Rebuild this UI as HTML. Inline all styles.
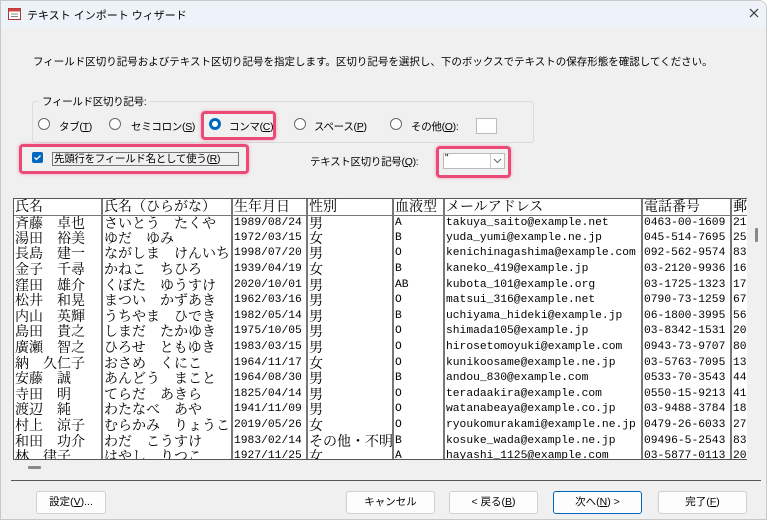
<!DOCTYPE html>
<html><head><meta charset="utf-8"><style>
*{margin:0;padding:0;box-sizing:border-box}
body{width:768px;height:520px;background:#fff;font-family:"Liberation Sans","Noto Sans CJK JP",sans-serif;font-size:11px;color:#000;position:relative;overflow:hidden}
.win{position:absolute;left:0;top:0;width:767px;height:520px;background:#f0f0f0;border:1px solid #c8c8c8;border-radius:0 8px 0 0;overflow:hidden}
.title{position:absolute;left:0;top:0;width:100%;height:26px;background:#eef3fa}
.abs{position:absolute;white-space:nowrap}
.lbl{font-size:10.5px;letter-spacing:-.3px}
.pink{position:absolute;border:3px solid #ec4a76;border-radius:4px;box-shadow:0 0 3px rgba(236,74,118,.5)}
.radio{position:absolute;width:12px;height:12px;border:1px solid #666;border-radius:50%;background:#fff}
.radio.on{border:none;background:#0067c0}
.radio.on:after{content:"";position:absolute;left:3px;top:3px;width:6px;height:6px;border-radius:50%;background:#fff}
.tbl{position:absolute;left:12px;top:197px;width:734px;height:262px;overflow:hidden;background:#fff;border:1px solid #555;border-right:none}
table{border-collapse:collapse;font-family:"Noto Serif CJK JP","Liberation Serif",serif;font-size:14px;table-layout:fixed;width:742px}
td{border-left:2px solid #777;height:15.6px;line-height:15px;padding:0 0 0 1px;white-space:nowrap;overflow:hidden;vertical-align:middle}
td:first-child{border-left:none}
tr.h td{border-bottom:1px solid #777;height:16px}
.m{font-family:"Liberation Mono",monospace;font-size:11.3px}
.btn{position:absolute;top:490px;height:23px;width:89px;background:#fdfdfd;border:1px solid #d0d0d0;border-radius:3px;text-align:center;line-height:21px;font-size:10.5px}
u{text-decoration:underline}
</style></head><body>
<div class="win">
<div class="title"></div>
<svg class="abs" style="left:7px;top:7px" width="13" height="12" viewBox="0 0 13 12"><rect x="0.5" y="0.5" width="12" height="11" fill="#fff" stroke="#a33"/><rect x="0.5" y="0.5" width="12" height="3" fill="#c44"/><line x1="3" y1="6" x2="10" y2="6" stroke="#888"/><line x1="3" y1="8.5" x2="10" y2="8.5" stroke="#888"/></svg>
<div class="abs" style="left:26px;top:6px;font-size:11px">テキスト インポート ウィザード</div>
<svg class="abs" style="left:748px;top:7px" width="10" height="10"><path d="M1 1L9 9M9 1L1 9" stroke="#333" stroke-width="1.2"/></svg>

<div class="abs" style="left:32px;top:53px;font-size:10.5px">フィールド区切り記号およびテキスト区切り記号を指定します。区切り記号を選択し、下のボックスでテキストの保存形態を確認してください。</div>

<div class="abs" style="left:31px;top:100px;width:502px;height:42px;border:1px solid #dcdcdc;border-radius:3px"></div>
<div class="abs lbl" style="left:38px;top:93px;background:#f0f0f0;padding:0 3px">フィールド区切り記号:</div>

<div class="radio" style="left:37px;top:117px"></div><div class="abs lbl" style="left:58px;top:118px">タブ(<u>T</u>)</div>
<div class="radio" style="left:108px;top:117px"></div><div class="abs lbl" style="left:130px;top:118px">セミコロン(<u>S</u>)</div>
<div class="radio on" style="left:208px;top:117px"></div><div class="abs lbl" style="left:228px;top:118px">コンマ(<u>C</u>)</div>
<div class="radio" style="left:293px;top:117px"></div><div class="abs lbl" style="left:313px;top:118px">スペース(<u>P</u>)</div>
<div class="radio" style="left:389px;top:117px"></div><div class="abs lbl" style="left:410px;top:118px">その他(<u>O</u>):</div>
<div class="abs" style="left:475px;top:117px;width:21px;height:16px;background:#fff;border:1px solid #bbb"></div>
<div class="pink" style="left:200px;top:110px;width:75px;height:29px"></div>

<div class="abs" style="left:31px;top:151px;width:11px;height:11px;background:#0067c0;border-radius:2px"></div>
<svg class="abs" style="left:32px;top:152px" width="9" height="9"><path d="M1.5 4.5L3.5 6.5L7.5 2.5" stroke="#fff" stroke-width="1.3" fill="none"/></svg>
<div class="abs lbl" style="left:51px;top:151px;width:187px;height:14px;border:1px solid #777;line-height:12px;padding-left:1px">先頭行をフィールド名として使う(<u>R</u>)</div>
<div class="pink" style="left:18px;top:143px;width:230px;height:30px"></div>

<div class="abs lbl" style="left:309px;top:153px">テキスト区切り記号(<u>Q</u>):</div>
<div class="abs" style="left:442px;top:152px;width:62px;height:16px;background:#fff;border:1px solid #bbb"></div>
<div class="abs" style="left:444px;top:152px;font-size:10px">"</div>
<div class="abs" style="left:489px;top:153px;width:1px;height:14px;background:#ccc"></div>
<svg class="abs" style="left:492px;top:157px" width="9" height="6"><path d="M1 1L4.5 4.5L8 1" stroke="#666" fill="none"/></svg>
<div class="pink" style="left:435px;top:145px;width:75px;height:32px"></div>

<div class="tbl"><table>
<colgroup><col style="width:88px"><col style="width:130px"><col style="width:75px"><col style="width:86px"><col style="width:51px"><col style="width:198px"><col style="width:89px"><col style="width:25px"></colgroup>
<tr class="h"><td>氏名</td><td>氏名（ひらがな）</td><td>生年月日</td><td>性別</td><td>血液型</td><td>メールアドレス</td><td>電話番号</td><td>郵</td></tr>
<tr><td>斉藤　卓也</td><td>さいとう　たくや</td><td class="m">1989/08/24</td><td>男</td><td class="m">A</td><td class="m">takuya_saito@example.net</td><td class="m">0463-00-1609</td><td class="m">21</td></tr>
<tr><td>湯田　裕美</td><td>ゆだ　ゆみ</td><td class="m">1972/03/15</td><td>女</td><td class="m">B</td><td class="m">yuda_yumi@example.ne.jp</td><td class="m">045-514-7695</td><td class="m">25</td></tr>
<tr><td>長島　建一</td><td>ながしま　けんいち</td><td class="m">1998/07/20</td><td>男</td><td class="m">O</td><td class="m">kenichinagashima@example.com</td><td class="m">092-562-9574</td><td class="m">83</td></tr>
<tr><td>金子　千尋</td><td>かねこ　ちひろ</td><td class="m">1939/04/19</td><td>女</td><td class="m">B</td><td class="m">kaneko_419@example.jp</td><td class="m">03-2120-9936</td><td class="m">16</td></tr>
<tr><td>窪田　雄介</td><td>くぼた　ゆうすけ</td><td class="m">2020/10/01</td><td>男</td><td class="m">AB</td><td class="m">kubota_101@example.org</td><td class="m">03-1725-1323</td><td class="m">17</td></tr>
<tr><td>松井　和晃</td><td>まつい　かずあき</td><td class="m">1962/03/16</td><td>男</td><td class="m">O</td><td class="m">matsui_316@example.net</td><td class="m">0790-73-1259</td><td class="m">67</td></tr>
<tr><td>内山　英輝</td><td>うちやま　ひでき</td><td class="m">1982/05/14</td><td>男</td><td class="m">B</td><td class="m">uchiyama_hideki@example.jp</td><td class="m">06-1800-3995</td><td class="m">56</td></tr>
<tr><td>島田　貴之</td><td>しまだ　たかゆき</td><td class="m">1975/10/05</td><td>男</td><td class="m">O</td><td class="m">shimada105@example.jp</td><td class="m">03-8342-1531</td><td class="m">20</td></tr>
<tr><td>廣瀬　智之</td><td>ひろせ　ともゆき</td><td class="m">1983/03/15</td><td>男</td><td class="m">O</td><td class="m">hirosetomoyuki@example.com</td><td class="m">0943-73-9707</td><td class="m">80</td></tr>
<tr><td>納　久仁子</td><td>おさめ　くにこ</td><td class="m">1964/11/17</td><td>女</td><td class="m">O</td><td class="m">kunikoosame@example.ne.jp</td><td class="m">03-5763-7095</td><td class="m">13</td></tr>
<tr><td>安藤　誠</td><td>あんどう　まこと</td><td class="m">1964/08/30</td><td>男</td><td class="m">B</td><td class="m">andou_830@example.com</td><td class="m">0533-70-3543</td><td class="m">44</td></tr>
<tr><td>寺田　明</td><td>てらだ　あきら</td><td class="m">1825/04/14</td><td>男</td><td class="m">O</td><td class="m">teradaakira@example.com</td><td class="m">0550-15-9213</td><td class="m">41</td></tr>
<tr><td>渡辺　純</td><td>わたなべ　あや</td><td class="m">1941/11/09</td><td>男</td><td class="m">O</td><td class="m">watanabeaya@example.co.jp</td><td class="m">03-9488-3784</td><td class="m">18</td></tr>
<tr><td>村上　涼子</td><td>むらかみ　りょうこ</td><td class="m">2019/05/26</td><td>女</td><td class="m">O</td><td class="m">ryoukomurakami@example.ne.jp</td><td class="m">0479-26-6033</td><td class="m">27</td></tr>
<tr><td>和田　功介</td><td>わだ　こうすけ</td><td class="m">1983/02/14</td><td>その他・不明</td><td class="m">B</td><td class="m">kosuke_wada@example.ne.jp</td><td class="m">09496-5-2543</td><td class="m">83</td></tr>
<tr><td>林　律子</td><td>はやし　りつこ</td><td class="m">1927/11/25</td><td>女</td><td class="m">A</td><td class="m">hayashi_1125@example.com</td><td class="m">03-5877-0113</td><td class="m">20</td></tr>
</table></div>
<div class="abs" style="left:754px;top:227px;width:3px;height:14px;background:#888;border-radius:1px"></div>
<div class="abs" style="left:27px;top:465px;width:13px;height:3px;background:#888;border-radius:1px"></div>

<div class="abs" style="left:10px;top:479px;width:750px;height:1px;background:#555"></div>

<div class="btn" style="left:35px;width:70px">設定(<u>V</u>)...</div>
<div class="btn" style="left:345px">キャンセル</div>
<div class="btn" style="left:448px">&lt; 戻る(<u>B</u>)</div>
<div class="btn" style="left:552px;border-color:#0067c0">次へ(<u>N</u>) &gt;</div>
<div class="btn" style="left:657px">完了(<u>F</u>)</div>
</div>
</body></html>
